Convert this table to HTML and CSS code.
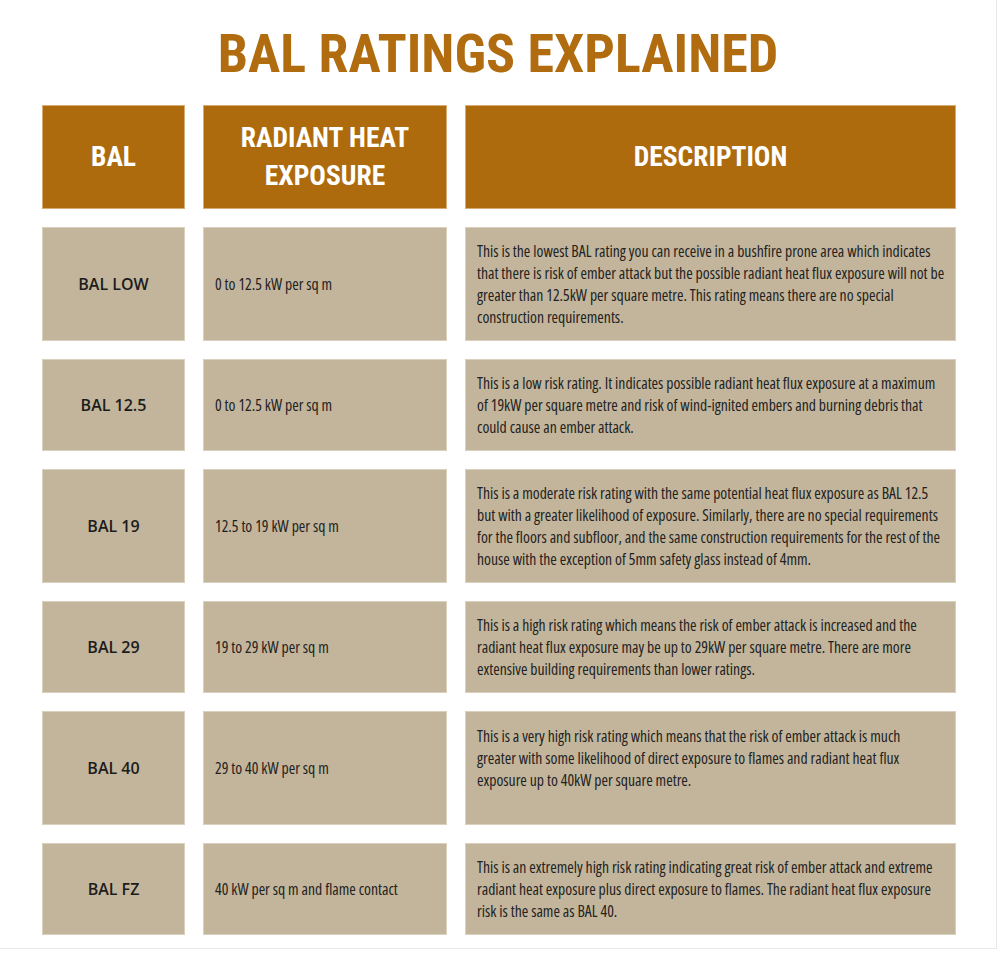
FILE: index.html
```html
<!DOCTYPE html>
<html lang="en">
<head>
<meta charset="utf-8">
<title>BAL Ratings Explained</title>
<link rel="stylesheet" href="styles.css">
</head>
<body>
<div class="page">
  <h1 class="title">BAL RATINGS EXPLAINED</h1>
  <div class="table">
    <div class="cell head">BAL</div>
    <div class="cell head">RADIANT HEAT<br>EXPOSURE</div>
    <div class="cell head">DESCRIPTION</div>

    <div class="cell bal">BAL LOW</div>
    <div class="cell heat">0 to 12.5 kW per sq m</div>
    <div class="cell desc"><p>This is the lowest BAL rating you can receive in a bushfire prone area which indicates<br>that there is risk of ember attack but the possible radiant heat flux exposure will not be<br>greater than 12.5kW per square metre. This rating means there are no special<br>construction requirements.</p></div>

    <div class="cell bal">BAL 12.5</div>
    <div class="cell heat">0 to 12.5 kW per sq m</div>
    <div class="cell desc"><p>This is a low risk rating. It indicates possible radiant heat flux exposure at a maximum<br>of 19kW per square metre and risk of wind-ignited embers and burning debris that<br>could cause an ember attack.</p></div>

    <div class="cell bal">BAL 19</div>
    <div class="cell heat">12.5 to 19 kW per sq m</div>
    <div class="cell desc"><p>This is a moderate risk rating with the same potential heat flux exposure as BAL 12.5<br>but with a greater likelihood of exposure. Similarly, there are no special requirements<br>for the floors and subfloor, and the same construction requirements for the rest of the<br>house with the exception of 5mm safety glass instead of 4mm.</p></div>

    <div class="cell bal">BAL 29</div>
    <div class="cell heat">19 to 29 kW per sq m</div>
    <div class="cell desc"><p>This is a high risk rating which means the risk of ember attack is increased and the<br>radiant heat flux exposure may be up to 29kW per square metre. There are more<br>extensive building requirements than lower ratings.</p></div>

    <div class="cell bal">BAL 40</div>
    <div class="cell heat">29 to 40 kW per sq m</div>
    <div class="cell desc desc-tall"><p>This is a very high risk rating which means that the risk of ember attack is much<br>greater with some likelihood of direct exposure to flames and radiant heat flux<br>exposure up to 40kW per square metre.</p></div>

    <div class="cell bal">BAL FZ</div>
    <div class="cell heat">40 kW per sq m and flame contact</div>
    <div class="cell desc"><p>This is an extremely high risk rating indicating great risk of ember attack and extreme<br>radiant heat exposure plus direct exposure to flames. The radiant heat flux exposure<br>risk is the same as BAL 40.</p></div>
  </div>
</div>
</body>
</html>
```
FILE: styles.css
```css
html, body {
  margin: 0;
  padding: 0;
  background: #ffffff;
}

.page {
  box-sizing: border-box;
  width: 997px;
  height: 949px;
  border-right: 1px solid #e8e8e8;
  border-bottom: 1px solid #e8e8e8;
  padding-top: 22px;
}

.title {
  margin: 0;
  text-align: center;
  font-family: "Roboto Condensed", "Roboto", sans-serif;
  font-weight: 700;
  font-size: 54px;
  line-height: 64px;
  color: #b06c0e;
}

.table {
  display: grid;
  grid-template-columns: 143px 244px 491px;
  gap: 18px;
  margin: 19px 0 0 42px;
}

.cell {
  box-sizing: border-box;
  display: flex;
  align-items: center;
  background: #c2b59b;
  border: 1px solid #d9d0bd;
  color: #222222;
}

.head {
  background: #ae6b0e;
  border-color: #d6ac74;
  color: #ffffff;
  justify-content: center;
  text-align: center;
  font-family: "Roboto Condensed", "Roboto", sans-serif;
  font-weight: 700;
  font-size: 27.5px;
  line-height: 38px;
  padding: 13px 6px;
}

.bal {
  justify-content: center;
  text-align: center;
  font-family: "Open Sans", sans-serif;
  font-weight: 600;
  font-size: 16px;
  color: #1c1c1c;
}

.heat,
.desc {
  font-family: "Open Sans", sans-serif;
  font-stretch: 75%;
  font-weight: 500;
  font-size: 15.7px;
  line-height: 22px;
}

.desc p {
  margin: 0;
}

.heat {
  padding: 12px 11px;
}

.desc {
  padding: 12px 1px 12px 11px;
}

.desc-tall {
  align-items: flex-start;
  padding-top: 13px;
  padding-bottom: 33px;
}
```
